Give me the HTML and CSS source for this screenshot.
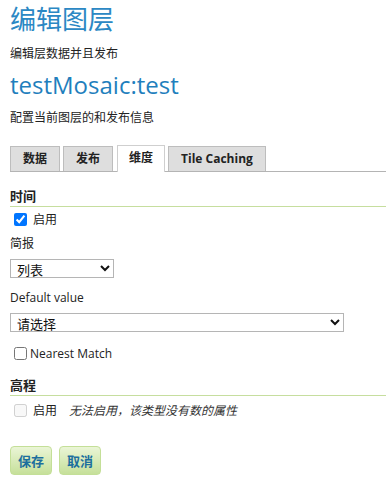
FILE: index.html
```html
<!DOCTYPE html>
<html lang="zh">
<head>
<meta charset="UTF-8" />
<title>编辑图层</title>
<link rel="stylesheet" href="styles.css">
</head>
<body>
    <div class="page">
        <h1 class="page-title">编辑图层</h1>
        <p class="page-note">编辑层数据并且发布</p>
        <h2 class="layer-name">testMosaic:test</h2>
        <p class="page-note note-config">配置当前图层的和发布信息</p>

        <!-- tabs -->
        <ul class="tabs">
            <li class="tab">数据</li>
            <li class="tab">发布</li>
            <li class="tab active">维度</li>
            <li class="tab">Tile Caching</li>
        </ul>

        <div class="section">
            <h3 class="section-title">时间</h3>
            <label class="check"><input type="checkbox" checked> 启用</label>
            <div class="field-label">简报</div>
            <select class="select small"><option>列表</option></select>
            <div class="field-label">Default value</div>
            <select class="select wide"><option>请选择</option></select>
            <label class="check nearest"><input type="checkbox">Nearest Match</label>
        </div>

        <div class="section section-elevation">
            <h3 class="section-title">高程</h3>
            <div class="check disabled">
                <input type="checkbox" disabled> 启用
                <em class="hint">无法启用，该类型没有数的属性</em>
            </div>
        </div>

        <div class="buttons">
            <button class="btn">保存</button>
            <button class="btn">取消</button>
        </div>
    </div>
</body>
</html>
```

FILE: styles.css
```css
html, body {
    margin: 0;
    padding: 0;
    background: #fff;
}

body {
    font-family: "Open Sans", "Noto Sans CJK SC", sans-serif;
    color: #222;
    font-size: 12px;
}

.page {
    padding: 0 0 0 10px;
}

.page-title {
    margin: 0;
    padding-top: 2px;
    font-size: 26px;
    line-height: 34px;
    font-weight: normal;
    color: #2b88c4;
}

.page-note {
    margin: 9px 0 0 0;
    font-size: 12px;
    line-height: 18px;
}

.layer-name {
    margin: 6px 0 0 0;
    font-size: 24px;
    line-height: 32px;
    font-weight: normal;
    color: #1f7fbd;
}

.note-config {
    margin-top: 8px;
}

.tabs {
    list-style: none;
    margin: 18px 0 0 0;
    padding: 0;
    display: flex;
    align-items: flex-end;
    gap: 3px;
    border-bottom: 1px solid #b4b4b4;
}

.tab {
    background: #dedede;
    border: 1px solid #bdbdbd;
    border-bottom: none;
    height: 24px;
    line-height: 24px;
    padding: 0 12px;
    font-weight: bold;
    font-size: 12px;
    color: #222;
}

.tab.active {
    background: #fff;
    border-color: #cfcfcf;
    height: 25px;
    margin: 0 0 -1px 1px;
    padding: 0 11px 1px 11px;
}

.section-title {
    margin: 16px 0 0 0;
    font-size: 13px;
    line-height: 16px;
    padding-bottom: 2px;
    border-bottom: 1px solid #c6de9e;
    color: #222;
}

.section-elevation .section-title {
    margin-top: 13px;
}

.check {
    display: flex;
    align-items: center;
    height: 22px;
    margin-top: 1px;
    font-size: 12px;
}

.check input {
    width: 13px;
    height: 13px;
    margin: 0 6px 0 4px;
}

.field-label {
    margin-top: 5px;
    line-height: 18px;
}

.select {
    display: block;
    height: 19px;
    margin-top: 6px;
    font-family: "Open Sans", "Noto Sans CJK SC", sans-serif;
    font-size: 13px;
    border: 1px solid #b5b5b5;
    background: #fff;
    color: #111;
    padding: 0 2px;
}

.select.small {
    width: 104px;
}

.select.wide {
    width: 334px;
}

.select + .field-label {
    margin-top: 11px;
}

.nearest {
    margin-top: 10px;
}

.nearest input {
    margin-right: 3px;
}

.disabled {
    margin-top: 3px;
}

.hint {
    margin-left: 12px;
    color: #333;
}

.buttons {
    display: flex;
    gap: 7px;
    margin-top: 25px;
}

.btn {
    height: 29px;
    padding: 0 7px;
    font-family: "Open Sans", "Noto Sans CJK SC", sans-serif;
    font-size: 13px;
    font-weight: bold;
    color: #1d6f9e;
    background: linear-gradient(#eaf5d6, #c6e09a);
    border: 1px solid #c4df98;
    border-radius: 4px;
}
```
